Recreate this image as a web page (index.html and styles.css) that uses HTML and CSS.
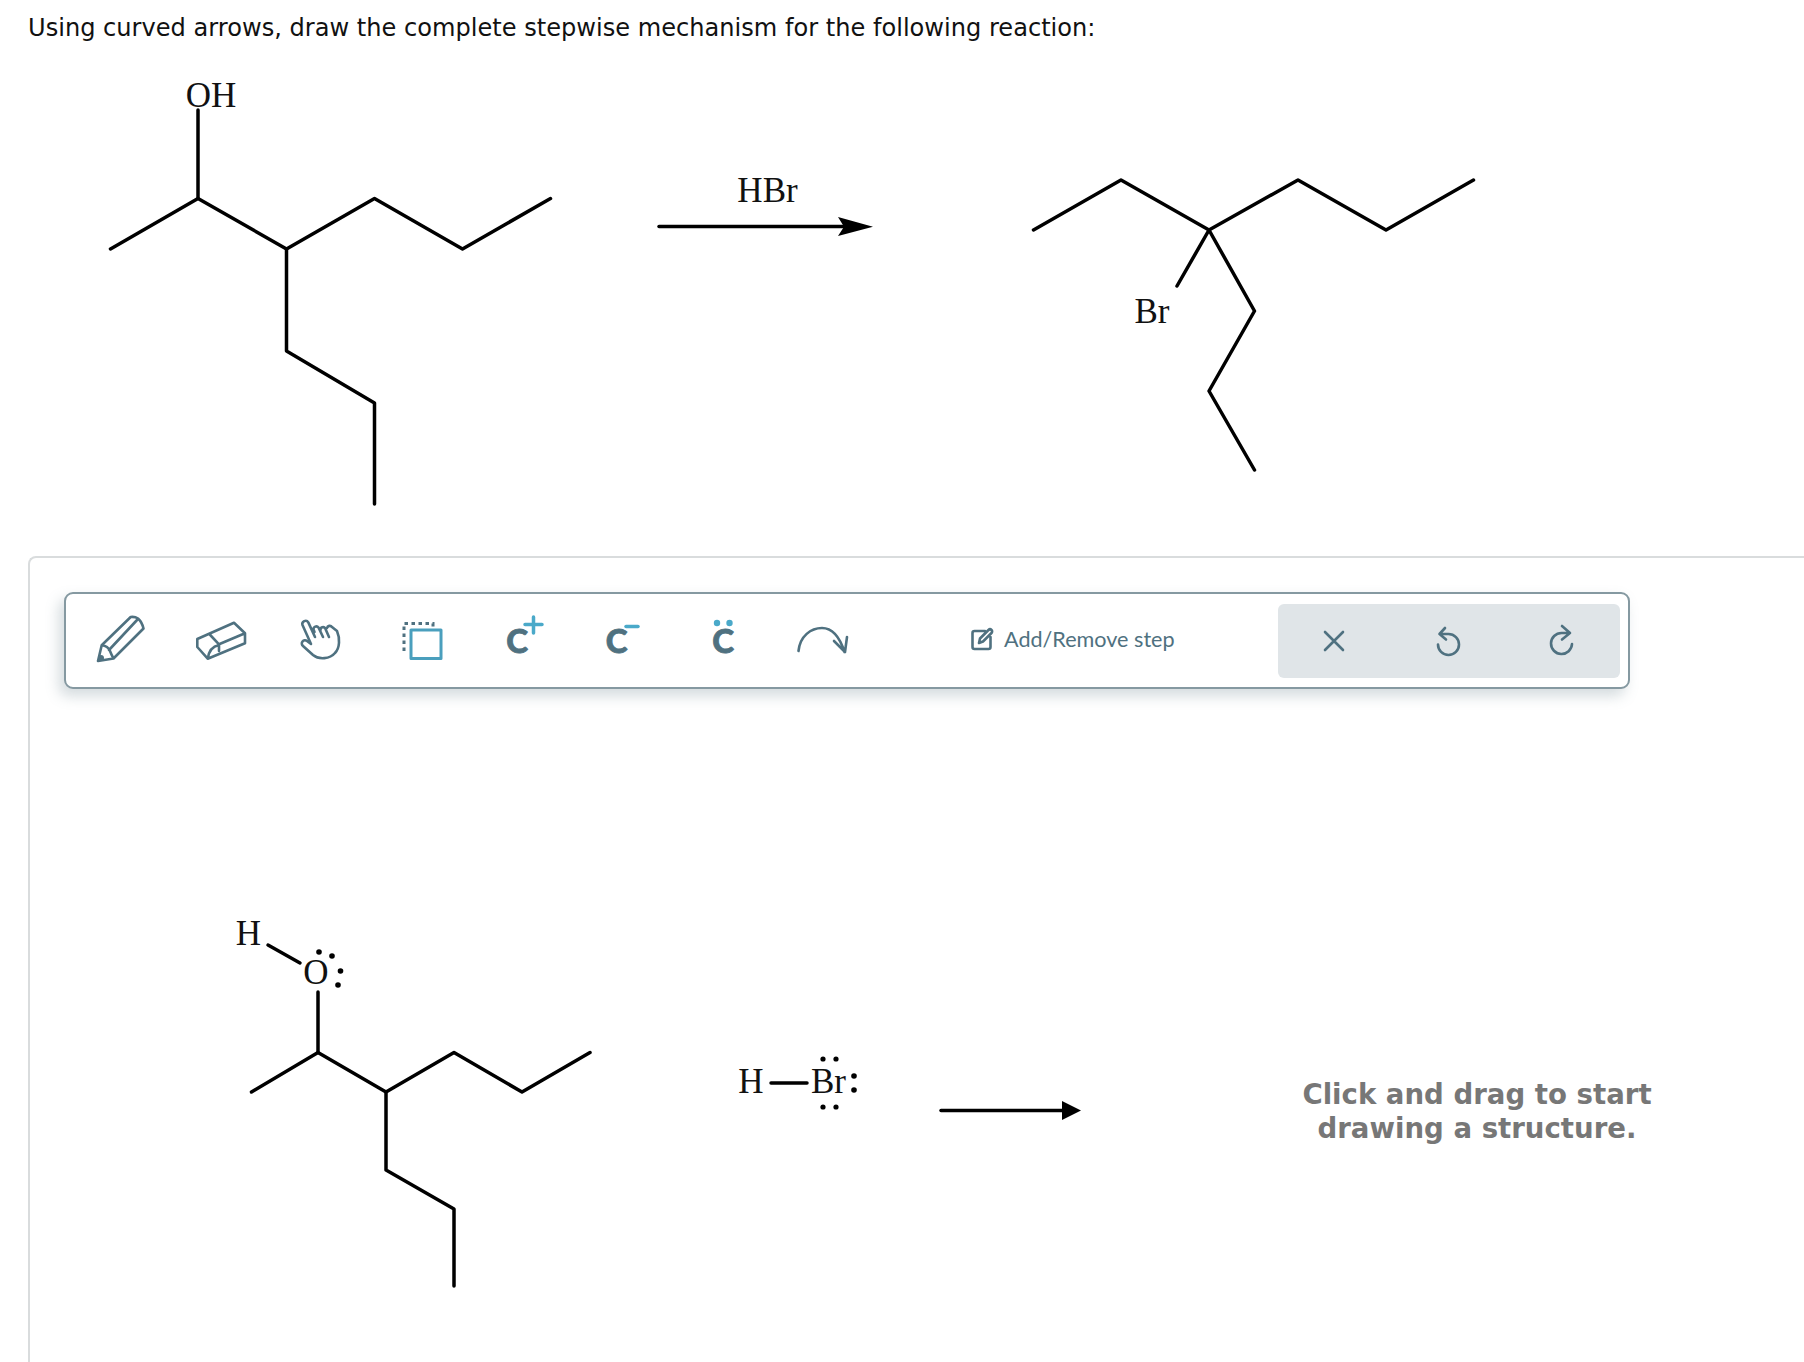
FILE: index.html
```html
<!DOCTYPE html>
<html lang="en">
<head>
<meta charset="utf-8">
<title>Curved arrow mechanism</title>
<link rel="stylesheet" href="styles.css">
</head>
<body>
<p class="prompt">Using curved arrows, draw the complete stepwise mechanism for the following reaction:</p>
<svg class="reaction" viewBox="0 57 1804 499" width="1804" height="499">
  <g class="bond">
    <polyline points="110.500,249 198,198.500 286.500,249 374.500,198.500 462.500,249 550.500,198.500"/>
    <polyline points="198,198.500 198,110"/>
    <polyline points="286.500,249 286.500,351 374.500,403 374.500,504"/>
    <polyline points="1033.500,230 1121,180 1209,230 1298,180 1386,230 1473.500,180"/>
    <polyline points="1209,230 1177,286"/>
    <polyline points="1209,230 1254.500,311 1209,391 1254.500,470"/>
    <line x1="659" y1="226.500" x2="850" y2="226.500"/>
  </g>
  <polygon class="fill" points="838,217 873,226.700 838,236 844,226.700"/>
  <text class="atom" x="211" y="107" text-anchor="middle">OH</text>
  <text class="atom" x="767.500" y="202" text-anchor="middle">HBr</text>
  <text class="atom" x="1152" y="323" text-anchor="middle">Br</text>
</svg>
<section class="panel">
  <div class="toolbar">
    <div class="tools">
      <svg class="tool" viewBox="71 610 100 60"><path class="ico" d="M98 660L101.700 644.300L130.700 616Q135 615.500 138 617.500Q142 621 143.500 627.500L113.500 657.500ZM101.700 644.300Q108 645 110 650Q111.500 654 113.500 657.500M109 649L137.500 618.500"/><circle class="ico-fill" cx="101" cy="657" r="3"/></svg>
      <svg class="tool" viewBox="171 610 100 60"><path class="ico" d="M197.300 638L234 621.700L245 632.300V642.300L207.700 657.700L197.300 646ZM209.300 633L219 643.300V650M219 643.300L245 632.300M207.700 657.700C209 648 214 645 219 644"/></svg>
      <svg class="tool" viewBox="271 610 100 60"><path class="ico" d="M311 643L302.500 624A3.200 3.200 0 0 1 308.300 621.400L315 636M314.500 631L313.500 628.500A2.800 2.800 0 0 1 318.500 626.500L323 636M320.500 629A2.600 2.600 0 0 1 325.300 627.400L329 636M327 627A2.800 2.800 0 0 1 332 626L337 630C340 637 340 647 335 652C330 658 319 659 313 654L303 645A3 3 0 0 1 307 640L311 643"/></svg>
      <svg class="tool" viewBox="371 610 100 60"><path class="dash" d="M404 650V622.500H433V628"/><rect class="square" x="411" y="629" width="30" height="28.500"/></svg>
      <svg class="tool" viewBox="471 610 100 60"><text class="cee" x="517" y="652" text-anchor="middle">C</text><path class="accent" d="M525 623.500H542M533.500 616V632"/></svg>
      <svg class="tool" viewBox="571 610 100 60"><text class="cee" x="616.500" y="652" text-anchor="middle">C</text><path class="accent" d="M626 625.500H638"/></svg>
      <svg class="tool" viewBox="671 610 100 60"><text class="cee" x="723" y="652" text-anchor="middle">C</text><circle class="accent-fill" cx="717" cy="622" r="3.200"/><circle class="accent-fill" cx="729.500" cy="622" r="3.200"/></svg>
      <svg class="tool" viewBox="771 610 100 60"><path class="ico" d="M798.500 650C800 635 811 627 822 627C833 627 840 637 844.500 651M834 640L845 651L847 636"/></svg>
    </div>
    <div class="step">
      <svg class="step-ico" viewBox="971 626 24 26"><path class="ico" d="M986 631H975.500A2 2 0 0 0 973.500 633V647A2 2 0 0 0 975.500 649H989.500A2 2 0 0 0 991.500 647V637M980 643L981 638.500L989.500 630A2 2 0 0 1 992.500 633L984 641.500Z"/></svg>
      <span>Add/Remove step</span>
    </div>
    <div class="actions">
      <svg class="action" viewBox="1278 610 114 60"><path class="ico" d="M1325 631L1343 649M1343 631L1325 649"/></svg>
      <svg class="action" viewBox="1392 610 114 60"><path class="ico" d="M1445 627L1439.500 633L1446 638.500M1439.500 633H1448.500A10.500 10.500 0 1 1 1438 643.500"/></svg>
      <svg class="action" viewBox="1506 610 114 60"><path class="ico" d="M1562 625L1570 632L1562 638.500M1570 632H1561.500A10.500 10.500 0 1 0 1572 643"/></svg>
    </div>
  </div>
  <div class="canvas">
    <svg class="sketch" viewBox="30 689 1774 673" width="1774" height="673">
      <g class="bond">
        <polyline points="251.500,1092 318,1052.500 386,1092 454,1052.500 522,1092 590,1052.500"/>
        <polyline points="318,1052.500 318,992"/>
        <polyline points="386,1092 386,1170 454,1209 454,1286"/>
        <line x1="268" y1="945" x2="300" y2="963"/>
        <line x1="771" y1="1083" x2="807" y2="1083"/>
        <line x1="941" y1="1110.500" x2="1064" y2="1110.500"/>
      </g>
      <polygon class="fill" points="1062,1101 1081,1110.500 1062,1120"/>
      <text class="atom" x="248.500" y="945" text-anchor="middle">H</text>
      <text class="atom" x="316" y="984" text-anchor="middle">O</text>
      <text class="atom" x="751" y="1093" text-anchor="middle">H</text>
      <text class="atom" x="811" y="1093">Br</text>
      <g class="fill">
        <circle cx="319" cy="952" r="2.800"/><circle cx="332" cy="956" r="2.800"/>
        <circle cx="340.500" cy="971" r="2.800"/><circle cx="338" cy="985" r="2.800"/>
        <circle cx="823" cy="1059" r="2.600"/><circle cx="836" cy="1059" r="2.600"/>
        <circle cx="823" cy="1107" r="2.600"/><circle cx="836" cy="1107" r="2.600"/>
        <circle cx="854" cy="1076" r="2.800"/><circle cx="854" cy="1090" r="2.800"/>
      </g>
    </svg>
    <p class="hint">Click and drag to start<br>drawing a structure.</p>
  </div>
</section>
</body>
</html>
```
FILE: styles.css
```css
html, body {
  margin: 0;
  padding: 0;
  width: 1804px;
  height: 1362px;
  overflow: hidden;
  background: #fff;
}
.prompt {
  margin: 0;
  height: 57px;
  padding: 13px 0 0 28px;
  box-sizing: border-box;
  font: 24.1px/30px "DejaVu Sans", sans-serif;
  color: #111;
}
.reaction, .sketch { display: block; }
.bond { fill: none; stroke: #000; stroke-width: 3.500; stroke-linecap: round; stroke-linejoin: round; }
.fill { fill: #000; }
.atom { font: 35px "Liberation Serif", serif; fill: #111; }
.panel {
  margin-left: 28px;
  height: 806px;
  box-sizing: border-box;
  border-top: 2px solid #d9dcdd;
  border-left: 2px solid #d9dcdd;
  border-top-left-radius: 8px;
  padding: 34px 0 0 34px;
}
.toolbar {
  display: flex;
  align-items: center;
  width: 1566px;
  height: 97px;
  box-sizing: border-box;
  padding: 0 8px 0 5px;
  border: 2px solid #8599a1;
  border-radius: 9px;
  background: #fff;
  box-shadow: -5px 7px 14px rgba(100, 125, 135, .28);
}
.tools { display: flex; }
.tool { display: block; width: 100px; height: 60px; }
.step {
  display: flex;
  align-items: center;
  gap: 10px;
  margin: 0 0 4px 99px;
  font: 21.6px "Lato", sans-serif;
  color: #4f7180;
}
.step-ico { width: 24px; height: 26px; }
.actions {
  display: flex;
  margin-left: auto;
  height: 74px;
  align-items: center;
  background: #e0e5e8;
  border-radius: 6px;
}
.action { display: block; width: 114px; height: 60px; }
.ico { fill: none; stroke: #4f7180; stroke-width: 2.600; stroke-linecap: round; stroke-linejoin: round; }
.ico-fill { fill: #4f7180; }
.dash { fill: none; stroke: #4f7180; stroke-width: 3; stroke-dasharray: 3.500 3.500; }
.square { fill: #fff; stroke: #4a9fbd; stroke-width: 3; stroke-linejoin: round; }
.cee { font: 900 33px "Lato", sans-serif; fill: #4f7180; stroke: #4f7180; stroke-width: .8; }
.accent { fill: none; stroke: #4aa9c9; stroke-width: 3.500; stroke-linecap: round; }
.accent-fill { fill: #4aa9c9; }
.canvas { position: relative; margin-left: -34px; }
.hint {
  position: absolute;
  left: 1247px;
  top: 389px;
  width: 400px;
  margin: 0;
  text-align: center;
  font: 700 27.6px/34px "DejaVu Sans", sans-serif;
  color: #777;
}
```
